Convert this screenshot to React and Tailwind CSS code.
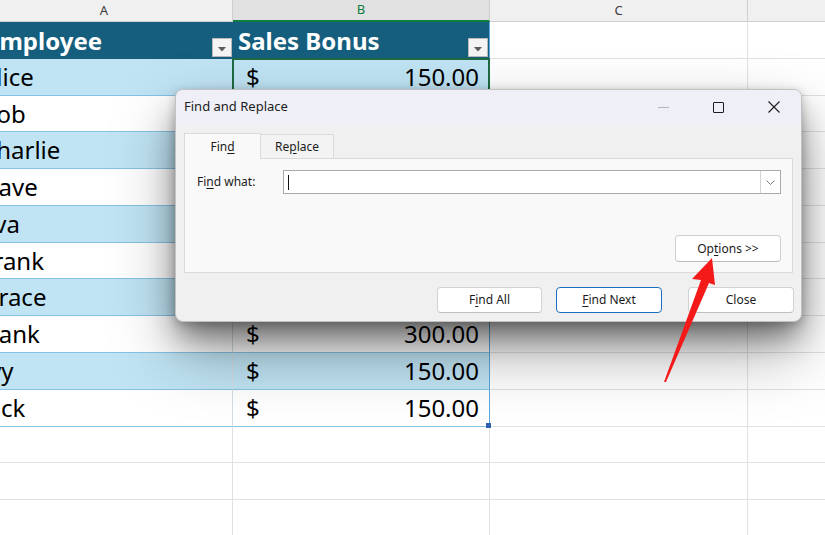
import React from 'react';

const rows = [
  { name: 'Alice', bonus: '150.00', h: 'h-[37px]' },
  { name: 'Bob', bonus: '200.00', h: 'h-[36px]' },
  { name: 'Charlie', bonus: '150.00', h: 'h-[37px]' },
  { name: 'Dave', bonus: '250.00', h: 'h-[37px]' },
  { name: 'Eva', bonus: '150.00', h: 'h-[37px]' },
  { name: 'Frank', bonus: '200.00', h: 'h-[36px]' },
  { name: 'Grace', bonus: '150.00', h: 'h-[37px]' },
  { name: 'Hank', bonus: '300.00', h: 'h-[37px]' },
  { name: 'Ivy', bonus: '150.00', h: 'h-[37px]' },
  { name: 'Jack', bonus: '150.00', h: 'h-[37px]' },
];

const FilterButton = () => (
  <div className="ml-auto mr-px self-end mb-[2px] w-[20px] h-[19px] bg-[#f4f4f4] border border-[#b9b9b9] flex items-center justify-center">
    <svg width="8" height="5" viewBox="0 0 8 5" className="mt-[3px]">
      <path d="M0 0 H8 L4 4.5 Z" fill="#5a5a5a" />
    </svg>
  </div>
);

const Btn = ({ children, className = '' }) => (
  <div className={`h-[26px] flex items-center justify-center bg-white rounded-[4px] border text-[12px] ${className}`}>
    {children}
  </div>
);

const FindDialog = () => (
  <div className="absolute left-[175px] top-[89px] w-[627px] h-[233px] rounded-[8px] border border-[#c2c2c2] bg-[#f0f0f0] shadow-[0_18px_28px_-4px_rgba(0,0,0,0.42),0_30px_64px_rgba(0,0,0,0.34),0_2px_10px_rgba(0,0,0,0.2)] overflow-hidden flex flex-col text-[#1b1b1b]">
    {/* title bar */}
    <div className="h-[34px] shrink-0 bg-[#eff0f7] flex items-center pl-[8px]">
      <span className="text-[13px]">Find and Replace</span>
      <div className="ml-auto flex h-full">
        <div className="w-[55px] flex items-center justify-center">
          <div className="w-[11px] h-px bg-[#b4b4b4]" />
        </div>
        <div className="w-[55px] flex items-center justify-center">
          <div className="w-[11px] h-[11px] border border-[#1b1b1b] rounded-[1px]" />
        </div>
        <div className="w-[55px] flex items-center justify-center">
          <svg width="12" height="12" viewBox="0 0 12 12">
            <path d="M0.5 0.5 L11.5 11.5 M11.5 0.5 L0.5 11.5" stroke="#1b1b1b" strokeWidth="1.1" />
          </svg>
        </div>
      </div>
    </div>

    <div className="flex-1 flex flex-col px-[8px] pt-[9px]">
      {/* tabs */}
      <div className="flex items-end h-[25px] text-[12px]">
        <div className="w-[77px] h-[26px] -mb-px bg-[#f9f9f9] border border-b-0 border-[#dadada] flex items-center justify-center relative z-10">
          <span>
            Fin<span className="underline underline-offset-2">d</span>
          </span>
        </div>
        <div className="w-[73px] h-[24px] bg-[#f3f3f3] border border-l-0 border-b-0 border-[#dadada] flex items-center justify-center">
          <span>
            Re<span className="underline underline-offset-2">p</span>lace
          </span>
        </div>
      </div>

      {/* panel */}
      <div className="h-[115px] bg-[#f9f9f9] border border-[#dadada] flex flex-col pt-[11px] pb-[10px] pr-[11px]">
        <div className="flex items-center">
          <div className="w-[98px] pl-[12px] text-[12px]">
            Fi<span className="underline underline-offset-2">n</span>d what:
          </div>
          <div className="flex-1 h-[24px] bg-white border border-[#a9a9a9] flex items-center">
            <div className="ml-[4px] w-px h-[15px] bg-[#111]" />
            <div className="ml-auto w-[20px] h-full border-l border-[#d4d4d4] flex items-center justify-center">
              <svg width="9" height="5" viewBox="0 0 9 5">
                <path d="M0.5 0.5 L4.5 4.5 L8.5 0.5" fill="none" stroke="#7a7a7a" strokeWidth="1" />
              </svg>
            </div>
          </div>
        </div>
        <div className="mt-auto flex justify-end">
          <Btn className="w-[106px] h-[27px] border-[#cfcfcf] border-b-[#bdbdbd]">
            <span>
              Op<span className="underline underline-offset-2">t</span>ions &gt;&gt;
            </span>
          </Btn>
        </div>
      </div>

      {/* bottom buttons */}
      <div className="flex justify-end mt-[14px] -mr-px">
        <Btn className="w-[105px] border-[#d2d2d2] border-b-[#bfbfbf]">
          <span>
            F<span className="underline underline-offset-2">i</span>nd All
          </span>
        </Btn>
        <Btn className="w-[106px] ml-[14px] border-[#1a6fc4]">
          <span>
            <span className="underline underline-offset-2">F</span>ind Next
          </span>
        </Btn>
        <Btn className="w-[106px] ml-[26px] border-[#d2d2d2] border-b-[#bfbfbf]">
          <span>Close</span>
        </Btn>
      </div>
    </div>
  </div>
);

const App = () => {
  return (
    <div className="relative w-[825px] h-[535px] overflow-hidden bg-white font-['Noto_Sans',sans-serif] select-none">
      {/* column headers */}
      <div className="flex h-[22px] text-[13px] text-[#3c3c3c] bg-[#f0f0f0]">
        <div className="-ml-[24px] w-[257px] shrink-0 flex items-center justify-center border-b border-r border-[#cfcfcf]">A</div>
        <div className="w-[257px] shrink-0 flex items-center justify-center bg-[#e1e1e1] text-[#107c41] border-r border-[#cfcfcf] border-b-2 border-b-[#107c41]">B</div>
        <div className="w-[258px] shrink-0 flex items-center justify-center border-b border-r border-[#cfcfcf]">C</div>
        <div className="flex-1 border-b border-[#cfcfcf]" />
      </div>

      {/* table header */}
      <div className="flex h-[37px]">
        <div className="-ml-[24px] w-[257px] shrink-0 flex items-center pl-[10px] bg-[#155e7e] text-white font-bold text-[24px] whitespace-nowrap">
          <span>Employee</span>
          <FilterButton />
        </div>
        <div className="w-[257px] shrink-0 flex items-center pl-[5px] bg-[#155e7e] text-white font-bold text-[24px] border-r border-[#5aa7dc] whitespace-nowrap">
          <span>Sales Bonus</span>
          <FilterButton />
        </div>
        <div className="w-[258px] shrink-0 border-b border-r border-[#e1e1e1]" />
        <div className="flex-1 border-b border-[#e1e1e1]" />
      </div>

      {/* data rows */}
      {rows.map((r, i) => {
        const band = i % 2 === 0 ? 'bg-[#c0e4f4]' : 'bg-white';
        return (
          <div key={r.name} className={`flex ${r.h} text-[24px] text-black`}>
            <div className={`-ml-[24px] w-[257px] shrink-0 flex items-center pl-[5px] border-b border-[#86c2e5] border-r border-r-[#d3dde3] whitespace-nowrap ${band}`}>
              {r.name}
            </div>
            <div className={`relative w-[257px] shrink-0 flex items-center pl-[13px] pr-[10px] border-b border-[#86c2e5] border-r border-r-[#5aa7dc] ${band}`}>
              <span>$</span>
              <span className="ml-auto">{r.bonus}</span>
              {i === 0 && <div className="absolute -left-px -top-px right-[-1px] bottom-0 border-2 border-[#1e6b43]" />}
              {i === rows.length - 1 && <div className="absolute right-[-2px] bottom-[-2px] w-[5px] h-[5px] bg-[#2f5fae]" />}
            </div>
            <div className="w-[258px] shrink-0 border-b border-r border-[#e1e1e1]" />
            <div className="flex-1 border-b border-[#e1e1e1]" />
          </div>
        );
      })}

      {/* empty rows */}
      {['h-[36px]', 'h-[37px]', 'h-[37px]'].map((h, i) => (
        <div key={i} className={`flex ${h}`}>
          <div className="-ml-[24px] w-[257px] shrink-0 border-b border-r border-[#e1e1e1]" />
          <div className="w-[257px] shrink-0 border-b border-r border-[#e1e1e1]" />
          <div className="w-[258px] shrink-0 border-b border-r border-[#e1e1e1]" />
          <div className="flex-1 border-b border-[#e1e1e1]" />
        </div>
      ))}

      <FindDialog />

      {/* red annotation arrow */}
      <svg className="absolute left-0 top-0 pointer-events-none" width="825" height="535" viewBox="0 0 825 535">
        <polygon
          points="712,258 715,285 709,283 666,382 664,382 701,280 692,279"
          fill="#f51a1a"
        />
      </svg>
    </div>
  );
};

export default App;
